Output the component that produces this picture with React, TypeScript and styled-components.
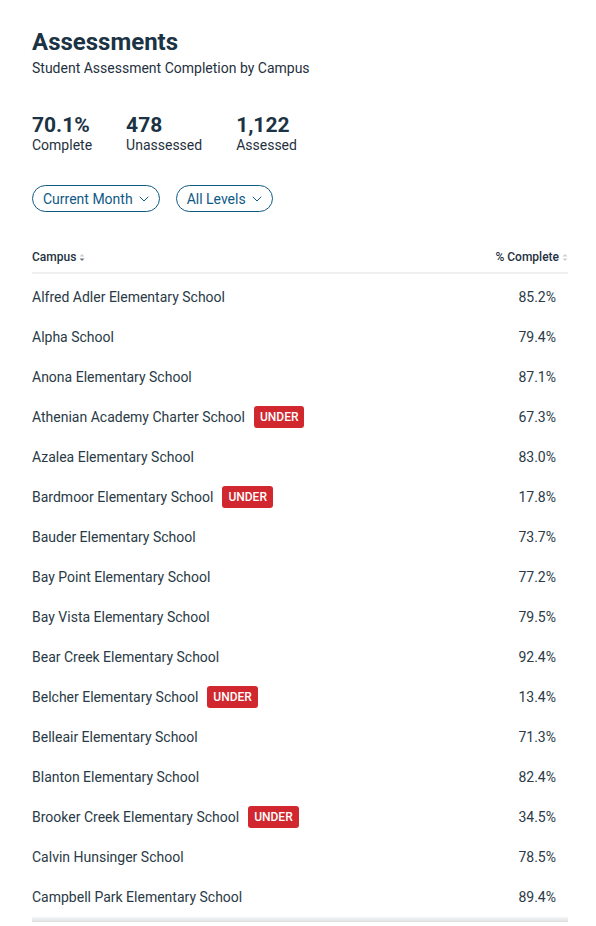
import styled, { createGlobalStyle } from "styled-components";

type TRow = {
  name: string,
  pct: string,
  under?: boolean,
}

const rows: TRow[] = [
  { name: "Alfred Adler Elementary School", pct: "85.2%" },
  { name: "Alpha School", pct: "79.4%" },
  { name: "Anona Elementary School", pct: "87.1%" },
  { name: "Athenian Academy Charter School", pct: "67.3%", under: true },
  { name: "Azalea Elementary School", pct: "83.0%" },
  { name: "Bardmoor Elementary School", pct: "17.8%", under: true },
  { name: "Bauder Elementary School", pct: "73.7%" },
  { name: "Bay Point Elementary School", pct: "77.2%" },
  { name: "Bay Vista Elementary School", pct: "79.5%" },
  { name: "Bear Creek Elementary School", pct: "92.4%" },
  { name: "Belcher Elementary School", pct: "13.4%", under: true },
  { name: "Belleair Elementary School", pct: "71.3%" },
  { name: "Blanton Elementary School", pct: "82.4%" },
  { name: "Brooker Creek Elementary School", pct: "34.5%", under: true },
  { name: "Calvin Hunsinger School", pct: "78.5%" },
  { name: "Campbell Park Elementary School", pct: "89.4%" },
];

const stats = [
  { value: "70.1%", label: "Complete" },
  { value: "478", label: "Unassessed" },
  { value: "1,122", label: "Assessed" },
];

const Chevron = () => (
  <svg width="10" height="6" viewBox="0 0 10 6" fill="none">
    <path d="M1 1l4 4 4-4" stroke="currentColor" strokeWidth="1" strokeLinecap="round" strokeLinejoin="round" />
  </svg>
);

const SortIcon = ({ active }: { active?: boolean }) => (
  <svg width="6" height="9" viewBox="0 0 6 9">
    <path d="M0.5 3.5L3 1l2.5 2.5z" fill="#c9cdd1" />
    <path d="M0.5 5.5L3 8l2.5-2.5z" fill={active ? "#6b7680" : "#c9cdd1"} />
  </svg>
);

export default function App() {
  return (
    <>
      <GlobalStyle />
      <Page>
        <Title>Assessments</Title>
        <Subtitle>Student Assessment Completion by Campus</Subtitle>
        <Stats>
          {stats.map((s) => (
            <Stat key={s.label}>
              <StatValue>{s.value}</StatValue>
              <StatLabel>{s.label}</StatLabel>
            </Stat>
          ))}
        </Stats>
        <Filters>
          <FilterButton>Current Month <Chevron /></FilterButton>
          <FilterButton>All Levels <Chevron /></FilterButton>
        </Filters>
        <Table>
          <HeaderRow>
            <HeaderCell>Campus <SortIcon active /></HeaderCell>
            <HeaderCell>% Complete <SortIcon /></HeaderCell>
          </HeaderRow>
          {rows.map((r) => (
            <Row key={r.name}>
              <Name>
                {r.name}
                {r.under && <Badge>UNDER</Badge>}
              </Name>
              <Pct>{r.pct}</Pct>
            </Row>
          ))}
          <Footer />
        </Table>
      </Page>
    </>
  );
}

const GlobalStyle = createGlobalStyle`
  body {
    margin: 0;
    background: #ffffff;
    font-family: Roboto, "Liberation Sans", sans-serif;
    color: #1f3140;
  }
`
const Page = styled.div`
  padding: 27px 28px 0 32px;
  display: flex;
  flex-direction: column;
`
const Title = styled.h1`
  margin: 0;
  font-size: 24px;
  font-weight: 700;
  line-height: 30px;
  color: #1b3344;
`
const Subtitle = styled.p`
  margin: 2px 0 0;
  font-size: 14px;
  line-height: 18px;
  color: #1f3140;
`
const Stats = styled.div`
  display: flex;
  gap: 34px;
  margin-top: 36px;
`
const Stat = styled.div`
  display: flex;
  flex-direction: column;
`
const StatValue = styled.span`
  font-size: 21px;
  font-weight: 700;
  line-height: 24px;
  color: #1b3344;
`
const StatLabel = styled.span`
  font-size: 14px;
  line-height: 17px;
  color: #1f3140;
`
const Filters = styled.div`
  display: flex;
  gap: 16px;
  margin-top: 31px;
`
const FilterButton = styled.button`
  display: flex;
  align-items: center;
  gap: 6px;
  height: 27px;
  padding: 0 10px;
  border: 1px solid #0e5a86;
  border-radius: 14px;
  background: #fff;
  color: #0e5a86;
  font-family: Roboto, "Liberation Sans", sans-serif;
  font-size: 14px;
  cursor: pointer;
`
const Table = styled.div`
  margin-top: 30px;
  width: 536px;
  display: flex;
  flex-direction: column;
`
const HeaderRow = styled.div`
  display: flex;
  justify-content: space-between;
  height: 30px;
  align-items: center;
  border-bottom: 2px solid #eef0f1;
  margin-bottom: 3px;
`
const HeaderCell = styled.div`
  display: flex;
  align-items: center;
  gap: 3px;
  font-size: 12px;
  font-weight: 500;
  color: #1f3140;
`
const Row = styled.div`
  display: flex;
  justify-content: space-between;
  align-items: center;
  height: 40px;
  padding-right: 12px;
`
const Name = styled.div`
  display: flex;
  align-items: center;
  gap: 9px;
  font-size: 14px;
  color: #2a3a46;
`
const Badge = styled.span`
  display: inline-flex;
  align-items: center;
  height: 22px;
  padding: 0 6px;
  border-radius: 3px;
  background: #d0282e;
  color: #fff;
  font-size: 12px;
  font-weight: 500;
`
const Pct = styled.div`
  font-size: 14px;
  color: #2a3a46;
`
const Footer = styled.div`
  height: 5px;
  background: linear-gradient(#f6f7f8, #dcdee0);
`
